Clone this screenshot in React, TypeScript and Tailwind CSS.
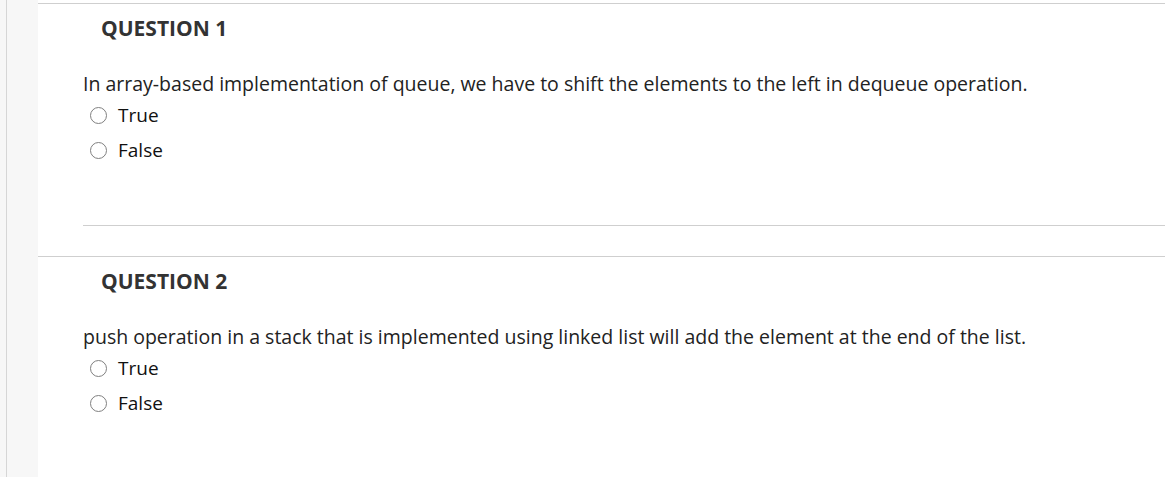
import React from 'react';

const Radio = ({ label }: { label: string }) => (
  <label className="flex items-center h-[35px]">
    <span className="w-[17px] h-[17px] rounded-full border border-[#808080] bg-white ml-[7px]" />
    <span className="ml-[11px] text-[19px] text-[#111]">{label}</span>
  </label>
);

const Question = ({ n, text }: { n: number; text: string }) => (
  <div className="pt-[8px]">
    <h3 className="pl-[63px] text-[21px] font-bold text-[#333] leading-[32px]">QUESTION {n}</h3>
    <div className="pl-[45px] mt-[27px]">
      <p className="text-[19.5px] text-[#222] leading-[25px]">{text}</p>
      <div className="mt-[2px]">
        <Radio label="True" />
        <Radio label="False" />
      </div>
    </div>
  </div>
);

export default function App() {
  return (
    <div className="flex w-[1165px] h-[477px] overflow-hidden bg-white" style={{ fontFamily: '"Open Sans", sans-serif' }}>
      <div className="w-[38px] bg-[#f7f7f7] flex">
        <div className="w-[6px]" />
        <div className="w-px bg-[#d6d6d6]" />
      </div>
      <div className="flex-1 pt-[3px]">
        <div className="border-t border-[#cfcfcf]">
          <Question n={1} text="In array-based implementation of queue, we have to shift the elements to the left in dequeue operation." />
          <div className="ml-[45px] mt-[57px] border-t border-[#cfcfcf]" />
        </div>
        <div className="mt-[30px] border-t border-[#cfcfcf]">
          <Question n={2} text="push operation in a stack that is implemented using linked list will add the element at the end of the list." />
        </div>
      </div>
    </div>
  );
}
